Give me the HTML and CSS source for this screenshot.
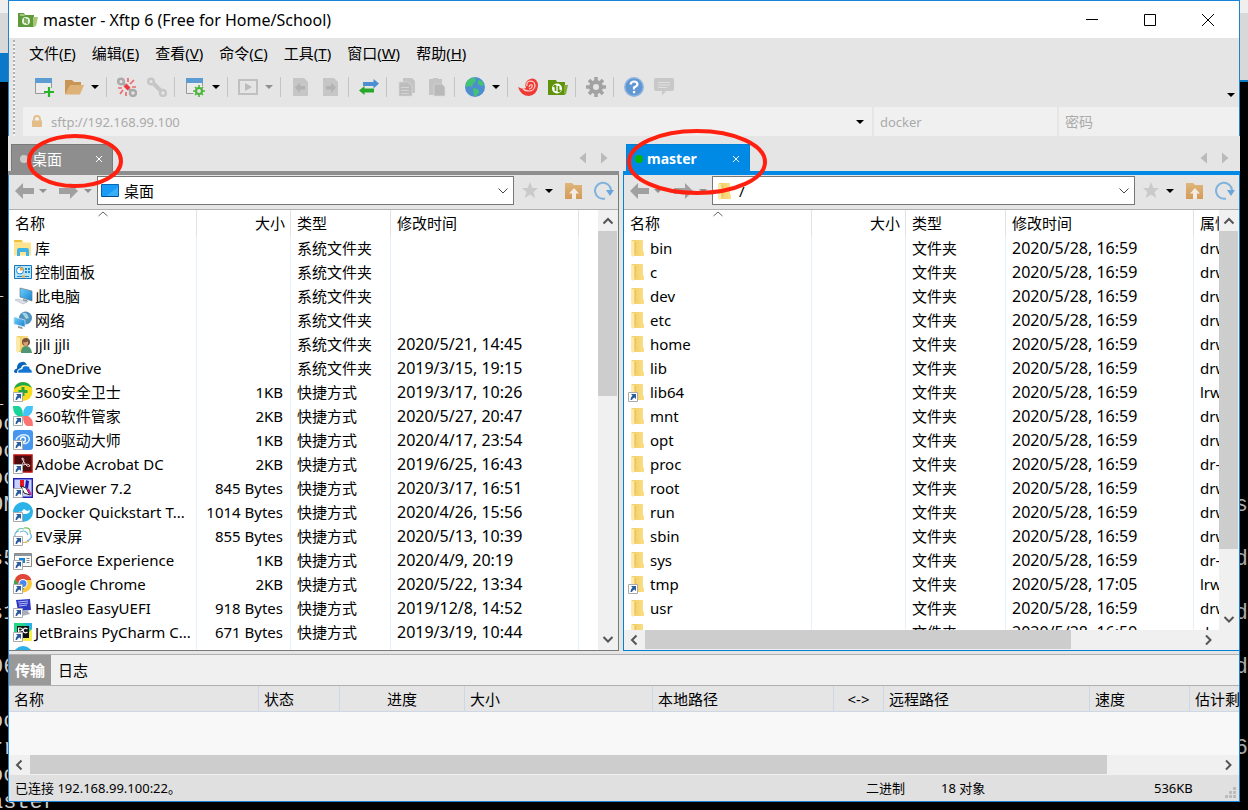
FILE: index.html
```
<!DOCTYPE html>
<html lang="zh-CN">
<head>
  <meta charset="UTF-8">
  <meta name="viewport" content="width=device-width, initial-scale=1.0">
  <title>master - Xftp 6 (Free for Home/School)</title>
  <link rel="stylesheet" href="styles.css">
</head>
<body>
  <svg class="sprite" aria-hidden="true">
    <defs>
      <linearGradient id="g-fold" x1="0" x2="1" y1="0" y2="0">
        <stop offset="0" stop-color="#f1cb62"/><stop offset="1" stop-color="#fbdf88"/>
      </linearGradient>
      <linearGradient id="g-screen" x1="0" x2="1" y1="0" y2="1">
        <stop offset="0" stop-color="#6fd0fb"/><stop offset="1" stop-color="#1583d4"/>
      </linearGradient>
      <linearGradient id="g-up" x1="0" x2="0" y1="0" y2="1">
        <stop offset="0" stop-color="#dfb67c"/><stop offset="1" stop-color="#d49b57"/>
      </linearGradient>
    </defs>
    <symbol id="caret" viewBox="0 0 10 20"><path d="M1 8h8L5 12z" fill="currentColor"/></symbol>
    <symbol id="link-mark" viewBox="0 0 20 20">
      <path d="M.5 10.500h9v9h-9z" fill="#fff" stroke="#aaa"/>
      <path d="M3 12h5v5l-1.500-1.500Q4.500 16 4 18H2.500q0-3 2-4.500z" fill="#2b5c9e"/>
    </symbol>
    <symbol id="folder" viewBox="0 0 20 20">
      <path d="M4 2h11v11l1 1v4H4z" fill="url(#g-fold)"/>
      <path d="M3 2l4 2v12l-2 3-2-2z" fill="#fde9a9"/>
      <path d="M7 4v12" stroke="#e3b850" fill="none"/>
    </symbol>
    <symbol id="library" viewBox="0 0 20 20">
      <path d="M1 2.500h8l1.500 2H18v13H1z" fill="#ffe38f"/><path d="M1 2h8v2H1z" fill="#f0c23c"/>
      <path d="M4 18v-6q0-2 2-2h8q2 0 2 2v6h-3v-4H7v4z" fill="#3eb5e6"/>
    </symbol>
    <symbol id="control" viewBox="0 0 20 20">
      <path d="M1.500 3.500h17v13h-17z" fill="#b7e5fb" stroke="#1a79b9"/>
      <circle cx="7" cy="8.500" r="3.500" fill="#fff" stroke="#2388cb"/><path d="M7 8.500V5a3.500 3.500 0 0 1 3.500 3.500z" fill="#f2a93b"/>
      <path d="M12 6h2v2h-2zM15 6h2v2h-2zM12 9h2v2h-2zM15 9h2v2h-2z" fill="#2388cb"/><path d="M4 14.500h12" stroke="#2388cb"/><path d="M9 13.500h3v2H9z" fill="#f2a93b"/>
    </symbol>
    <symbol id="pc" viewBox="0 0 20 20">
      <path d="M7 2l12 3v10L7 11z" fill="url(#g-screen)" stroke="#6d7c88" stroke-width=".7"/>
      <path d="M10 13l4 1 1 2-5-1z" fill="#8898a5"/><path d="M2 14l3-1 9 3-4 2z" fill="#dce2e8" stroke="#a9b3bb" stroke-width=".6"/>
    </symbol>
    <symbol id="network" viewBox="0 0 20 20">
      <circle cx="12.500" cy="8" r="6.500" fill="#4d93bd"/><path d="M9 3q3-1 5 1l2 4-3 1-2-3z" fill="#a5d3e6"/>
      <path d="M1 7l11 3v7L1 14z" fill="url(#g-screen)" stroke="#cde" stroke-width=".8"/><path d="M5 16l4 1 1 2-5-1z" fill="#8898a5"/>
    </symbol>
    <symbol id="user" viewBox="0 0 20 20">
      <path d="M4 2h11v16H4z" fill="url(#g-fold)"/><path d="M3 2l4 2v12l-2 3-2-2z" fill="#fde9a9"/>
      <circle cx="13" cy="8" r="4" fill="#76533d"/><path d="M10 8q3 1 5-1v3q-2 4-4 1z" fill="#d99e74"/><path d="M8 19q0-7 5-7t6 7z" fill="#4d9671"/>
    </symbol>
    <symbol id="onedrive" viewBox="0 0 20 20">
      <path d="M1 14q0-3 3-3.500Q4 4 9 4q3-1 5 3-5-1-6 3-4 1-4 5-3 0-3-1z" fill="#0a64b8"/>
      <path d="M5 15q-1-4 4-4 1-4 5-3 3 0 3 3 3 1 2 4z" fill="#1274d3" stroke="#fff" stroke-width=".6"/>
    </symbol>
    <symbol id="s360" viewBox="0 0 20 20">
      <circle cx="10" cy="9.500" r="9.500" fill="#f8dc1e"/><path d="M1 7Q3 0 10 0q6 0 9 6-8-6-18 1z" fill="#1fa94b"/><path d="M8.500 5h3v3h3v3h-3v3h-3v-3h-3V8h3z" fill="#24a53f"/>
    </symbol>
    <symbol id="soft360" viewBox="0 0 20 20">
      <path d="M0 0h6q4 2 4 10H5Q0 8 0 0z" fill="#19d39a"/><path d="M20 0h-6q-4 2-4 10h5q5-2 5-10z" fill="#43c3fa"/><path d="M20 20h-6q-4-2-4-10h5q5 2 5 10z" fill="#ff7272"/><path d="M0 20h6q4-2 4-10H5q-5 2-5 10z" fill="#ffb54d"/>
    </symbol>
    <symbol id="drv360" viewBox="0 0 20 20">
      <rect width="20" height="20" rx="3" fill="#4496ee"/><path d="M4 12q-2-2 1-5 5-4 10-1 3 4-1 7-2 1-4 0" fill="none" stroke="#d9ecff" stroke-width="1.500"/><circle cx="10" cy="9.500" r="2.500" fill="none" stroke="#fff" stroke-width="1.300"/>
    </symbol>
    <symbol id="acrobat" viewBox="0 0 20 20">
      <path d="M1 1h18v17H1z" fill="#4a0d10"/><path d="M1 1h18v17H1z" fill="none" stroke="#b9120f" stroke-width="1.500"/>
      <path d="M9 4q3 0 1 5-2 5-5 5-1-1 5-3t7 1q-3 2-6-4-3-4-2-4z" fill="none" stroke="#e8d5d5"/>
    </symbol>
    <symbol id="caj" viewBox="0 0 20 20">
      <path d="M.7.700h18.600v18.600H.700z" fill="#c9d2ff" stroke="#2420b4" stroke-width="1.400"/><path d="M7 2h4v7H7z" fill="#e41818"/><path d="M13 2l3 1-1 8-3-2z" fill="#201ab0"/><path d="M8 8l5 2 4 7-6-2z" fill="#fff" stroke="#222"/><path d="M15 11l3 6" stroke="#d02292" stroke-width="2"/>
    </symbol>
    <symbol id="docker" viewBox="0 0 20 20">
      <circle cx="10" cy="10" r="10" fill="#2bb2e6"/><path d="M6 9l2 1 3-3 3 2 3-1q0 4-5 4-5 0-6-3z" fill="#fff"/>
    </symbol>
    <symbol id="ev" viewBox="0 0 20 20">
      <g fill="none" stroke-width="1.200"><path d="M3 7Q5 1 11 3" stroke="#69c3ae"/><path d="M11 2q7-1 6 5" stroke="#79bd55"/><path d="M17 7q4 5-3 8" stroke="#58aede"/><path d="M16 15q-6 3-9 0" stroke="#d8ae5b"/><path d="M2 10q-1-4 4-5M7 6q6-3 8 3" stroke="#6ab7d6"/></g>
    </symbol>
    <symbol id="geforce" viewBox="0 0 20 20">
      <path d="M1.500 3.500h17v13h-17z" fill="#fafafa" stroke="#8a8a8a"/><path d="M2 4h16v2H2z" fill="#8f979d"/><path d="M6 8h6v5H9v-2H6z" fill="#1583d8"/><path d="M13.500 8.500h3m-3 2h3m-3 2h3" stroke="#888"/>
    </symbol>
    <symbol id="chrome" viewBox="0 0 20 20">
      <circle cx="10" cy="9.500" r="9" fill="#f9c93d"/><path d="M2 5a9 9 0 0 1 16.500 1H10L6 12z" fill="#e1463b"/><path d="M2 5l4.500 7 4.500 2-2 4.500A9 9 0 0 1 2 5z" fill="#3aa655"/><circle cx="10" cy="9.500" r="4.500" fill="#fff"/><circle cx="10" cy="9.500" r="3.500" fill="#4688f1"/>
    </symbol>
    <symbol id="uefi" viewBox="0 0 20 20">
      <path d="M3 2l14-1 1 11-13 1z" fill="#2e36c4"/><path d="M5 4l10-1M6 6l9-1M6 8l8-1" stroke="#b6bdf5"/><path d="M8 13l6-1 3 4-8 2z" fill="#a8adba"/>
    </symbol>
    <symbol id="pycharm" viewBox="0 0 20 20">
      <path d="M1 1h18v18H1z" fill="#21d789"/><path d="M11 1h8v8z" fill="#27b2e0"/><path d="M19 7v12H7z" fill="#f6ee4d"/><path d="M4 4h12v12H4z" fill="#111"/><path d="M5.500 11V6h2q2 .2 2 1.500T7.500 9h-2M14.500 7q-3-2-4 .5t1.500 3.300q1.500 0 2.500-.8" fill="none" stroke="#fff" stroke-width="1.200"/>
    </symbol>
    <symbol id="back" viewBox="0 0 20 20"><path d="M1 10l8-8v5h11v6H9v5z" fill="#a0a0a0"/></symbol>
    <symbol id="forward" viewBox="0 0 20 20"><path d="M19 10l-8-8v5H0v6h11v5z" fill="#a0a0a0"/></symbol>
    <symbol id="star" viewBox="0 0 20 20"><path d="M10 1l2.300 6H18l-4.500 4 1.800 6L10 13.500 4.700 17l1.800-6L2 7h5.700z" fill="#cacaca"/></symbol>
    <symbol id="up" viewBox="0 0 20 20"><path d="M1 2h7l2 2h8v14H1z" fill="url(#g-up)"/><path d="M10 7l5 5.500h-3V18H8v-5.500H5z" fill="#f2ece4"/></symbol>
    <symbol id="refresh" viewBox="0 0 20 20"><path d="M11 17.500A8 8 0 1 1 17 9" fill="none" stroke="#7fb2dd" stroke-width="2"/><path d="M12 9h8l-4 6z" fill="#69a4db"/></symbol>
    <symbol id="chev-d" viewBox="0 0 12 12"><path d="M1.500 3.500L6 8l4.500-4.500" fill="none" stroke="#444"/></symbol>
    <symbol id="arrow-u" viewBox="0 0 12 12"><path d="M1.500 8.500L6 4l4.500 4.500" fill="none" stroke="#555" stroke-width="2"/></symbol>
    <symbol id="arrow-d" viewBox="0 0 12 12"><path d="M1.500 3L6 7.500 10.500 3" fill="none" stroke="#555" stroke-width="2"/></symbol>
    <symbol id="arrow-l" viewBox="0 0 12 12"><path d="M7.500 1.500L3 6l4.500 4.500" fill="none" stroke="#555" stroke-width="2"/></symbol>
    <symbol id="arrow-r" viewBox="0 0 12 12"><path d="M3 1.500L7.500 6 3 10.500" fill="none" stroke="#555" stroke-width="2"/></symbol>
    <symbol id="tri-l" viewBox="0 0 12 12"><path d="M9 .5v11L2.500 6z" fill="#bababa"/></symbol>
    <symbol id="tri-r" viewBox="0 0 12 12"><path d="M3 .5v11L9.500 6z" fill="#bababa"/></symbol>
    <symbol id="close" viewBox="0 0 8 8"><path d="M1 1l6 6M7 1L1 7" stroke="#fff" fill="none"/></symbol>
  </svg>

  <div class="terminal" aria-hidden="true">
    <div class="behind"></div>
    <p><span>_</span></p><p></p><p></p><p></p><p><span>_</span></p>
    <p><span>oc</span></p><p><span>oc</span></p><p><span>oc</span></p>
    <p><span>ON</span><span>s</span></p><p></p>
    <p><span>s5</span><span>d</span></p><p></p>
    <p><span>s1</span><span>d</span></p><p></p>
    <p><span>06</span><span>d</span></p><p></p>
    <p><span>oc</span></p><p><span>rr</span><span>6</span></p><p><span>oc</span></p><p><span>aster</span></p>
  </div>

  <main class="window">
    <header class="titlebar">
      <svg class="app-icon" viewBox="0 0 20 16"><path d="M0 1h6l1 2h9v12H0z" fill="#5f9a3a"/><path d="M2 2h4l1 2H2zM15 5h5l-2 9-3 1z" fill="#a5c777"/><circle cx="8" cy="9" r="4" fill="#e8f1df"/><path d="M7 6v5M9 7v5" stroke="#5f9a3a" stroke-width="1.500"/></svg>
      <h1>master - Xftp 6 (Free for Home/School)</h1>
      <div class="win-buttons">
        <button aria-label="最小化"><svg viewBox="0 0 12 12"><path d="M0 5.500h12" stroke="#000"/></svg></button>
        <button aria-label="最大化"><svg viewBox="0 0 12 12"><path d="M.5.500h11v11H.500z" fill="none" stroke="#000"/></svg></button>
        <button aria-label="关闭"><svg viewBox="0 0 12 12"><path d="M0 0l12 12M12 0L0 12" stroke="#000"/></svg></button>
      </div>
    </header>

    <div class="bars">
      <div class="gripper"></div>
      <div class="bars-body">
        <nav class="menu">
          <button>文件(<u>F</u>)</button>
          <button>编辑(<u>E</u>)</button>
          <button>查看(<u>V</u>)</button>
          <button>命令(<u>C</u>)</button>
          <button>工具(<u>T</u>)</button>
          <button>窗口(<u>W</u>)</button>
          <button>帮助(<u>H</u>)</button>
        </nav>

        <div class="toolbar">
          <div class="group">
            <button aria-label="新建"><svg viewBox="0 0 20 20"><path d="M2 6h15v10H2z" fill="#ececec"/><path d="M1 1h17v5H1z" fill="#5d9bd3"/><path d="M1.500 6v10.500h10M17.500 6v5" fill="none" stroke="#999"/><path d="M15 10v10M10 15h10" stroke="#27b427" stroke-width="2.200"/></svg></button>
            <button aria-label="打开"><svg viewBox="0 0 20 20"><path d="M1 3h7l2 2h7v4H6l-4 8H1z" fill="#c89555"/><path d="M6 8h14l-4 9.500H1z" fill="#deb276"/></svg></button>
            <button class="drop" aria-label="打开列表"><svg><use href="#caret"/></svg></button>
          </div>
          <div class="group">
            <button aria-label="断开"><svg viewBox="0 0 20 20"><g fill="none" stroke="#aaa" stroke-width="2.500"><circle cx="4" cy="4.500" r="2.800"/><circle cx="16" cy="16" r="3"/></g><path d="M6 6l2 2M12 12l2 2" stroke="#aaa" stroke-width="3"/><path d="M11 5V1M13 7l4-4M15 10h4M1 11h4M3 17l3-4M9 15v4" stroke="#ec6a6e" stroke-width="1.700"/><path d="M8 8l4 4" stroke="#ec3a3e" stroke-width="4"/></svg></button>
            <button aria-label="连接"><svg viewBox="0 0 20 20"><g fill="none" stroke="#c6c6c6" stroke-width="2.500"><circle cx="4" cy="4.500" r="2.800"/><circle cx="16" cy="16" r="3"/><path d="M6 6l8 8" stroke-width="4"/></g></svg></button>
          </div>
          <div class="group">
            <button aria-label="会话属性"><svg viewBox="0 0 20 20"><path d="M2 6h15v10H2z" fill="#ececec"/><path d="M1 1h17v5H1z" fill="#5d9bd3"/><path d="M1.500 6v10.500h7M17.500 6v3" fill="none" stroke="#999"/><circle cx="14" cy="14" r="3" fill="#e5e5e5" stroke="#4db53c" stroke-width="2.200"/><path d="M14 8v3M14 17v3M8 14h3M17 14h3M10 10l2 2M16 16l2 2M18 10l-2 2M12 16l-2 2" stroke="#4db53c" stroke-width="1.600"/></svg></button>
            <button class="drop" aria-label="属性列表"><svg><use href="#caret"/></svg></button>
          </div>
          <div class="group">
            <button aria-label="运行" disabled><svg viewBox="0 0 20 20"><path d="M1 3h18v14H1z" fill="none" stroke="#c0c0c0" stroke-width="2"/><path d="M7 6l7 4-7 4z" fill="#bcbcbc"/></svg></button>
            <button class="drop" aria-label="运行列表" disabled><svg><use href="#caret"/></svg></button>
          </div>
          <div class="group">
            <button aria-label="下载" disabled><svg viewBox="0 0 20 20"><path d="M2 1h11l4 4v14H2z" fill="#c6c6c6"/><path d="M4 10.500l5-5v3.500h5v3.500H9V16z" fill="#b2b2b2"/></svg></button>
            <button aria-label="上传" disabled><svg viewBox="0 0 20 20"><path d="M2 1h11l4 4v14H2z" fill="#c6c6c6"/><path d="M15 10.500l-5-5v3.500H5v3.500h5V16z" fill="#b2b2b2"/></svg></button>
          </div>
          <div class="group">
            <button aria-label="同步"><svg viewBox="0 0 20 20"><path d="M20 6.500L14.500 2v3H4v4h10.500v2.500z" fill="#4c8ed0"/><path d="M0 13.500L5.500 9v2.500H15v4H5.500V18z" fill="#2aa72a"/></svg></button>
          </div>
          <div class="group">
            <button aria-label="复制" disabled><svg viewBox="0 0 20 20"><path d="M6 1h9l3 3v12H6z" fill="#c4c4c4"/><path d="M2 5h9l4 4v10H2z" fill="#bcbcbc" stroke="#dadada" stroke-width=".7"/><path d="M4 10.500h8m-8 3h8m-8 3h8" stroke="#d5d5d5"/></svg></button>
            <button aria-label="粘贴" disabled><svg viewBox="0 0 20 20"><path d="M2 2h4V1h5v1h4v16H2z" fill="#c4c4c4"/><path d="M7 7h8l3 3v9H7z" fill="#b9b9b9" stroke="#dadada" stroke-width=".7"/></svg></button>
          </div>
          <div class="group">
            <button aria-label="语言"><svg viewBox="0 0 20 20"><circle cx="10" cy="10" r="10" fill="#4d8fce"/><path d="M2 4q4-4 8-3l1 3-3 3-1 3-3-1-3 1Q0 7 2 4zM13 3l4 1 2 4-3 1-3-2zM8 11l5 1 1 3-3 4-2 0z" fill="#43c274"/></svg></button>
            <button class="drop" aria-label="语言列表"><svg><use href="#caret"/></svg></button>
          </div>
          <div class="group">
            <button aria-label="Xshell"><svg viewBox="0 0 20 20"><path d="M0 10q5 3 8 1-2-5 2-8 5-3 8 0 2 2 2 6-1 9-9 10Q3 19 0 10z" fill="#ef3b36"/><path d="M9 9q-1-4 3-5 5 0 5 5-1 5-6 5-4 0-6-2M11 10q1-3 3-2 1 3-3 4" fill="none" stroke="#ffd9d5" stroke-width="1.200"/></svg></button>
            <button aria-label="Xftp"><svg viewBox="0 0 20 20"><path d="M0 3h8l1 2h8v13H0z" fill="#5e930b"/><path d="M16 8h4l-2 9-2 1z" fill="#83ad38"/><circle cx="9" cy="11.500" r="5" fill="#fff"/><path d="M7.500 8v6M10.500 9v6M7.500 8l-2 2M10.500 15l2-2" fill="none" stroke="#5e930b" stroke-width="1.700"/></svg></button>
          </div>
          <div class="group">
            <button aria-label="选项"><svg viewBox="0 0 20 20"><path d="M10 0v20M0 10h20M3 3l14 14M17 3L3 17" stroke="#a2a2a2" stroke-width="3.500"/><circle cx="10" cy="10" r="5" fill="#e5e5e5" stroke="#a2a2a2" stroke-width="4"/></svg></button>
          </div>
          <div class="group">
            <button aria-label="帮助"><svg viewBox="0 0 20 20"><circle cx="10" cy="10" r="9.200" fill="#6097d2" stroke="#8fb5df" stroke-width="1.500"/><path d="M6.500 7.500q.5-3 3.500-3t3.500 2.500q0 2-3.500 3.500v2" fill="none" stroke="#fff" stroke-width="2.200"/><path d="M8.900 14h2.300v2.300H8.900z" fill="#fff"/></svg></button>
            <button aria-label="反馈" disabled><svg viewBox="0 0 20 20"><path d="M2 1h16q2 0 2 2v9q0 2-2 2h-6l-4 4.500V14H2q-2 0-2-2V3q0-2 2-2z" fill="#c8c8c8"/><path d="M4 5.500h12M4 8h12M4 10.500h9" stroke="#dfdfdf" stroke-width="1.200"/></svg></button>
          </div>
          <button class="drop more" aria-label="更多"><svg><use href="#caret"/></svg></button>
        </div>

        <form class="address">
          <div class="host">
            <svg class="lock" viewBox="0 0 12 14"><path d="M3 6V4q0-3 3-3t3 3v2" fill="none" stroke="#e3be88" stroke-width="1.800"/><path d="M1 5.500h10V12H1z" fill="#e3be88"/></svg>
            <input type="text" aria-label="主机" value="sftp://192.168.99.100">
            <button type="button" class="drop" aria-label="主机列表"><svg><use href="#caret"/></svg></button>
          </div>
          <input class="login" type="text" aria-label="用户名" value="docker">
          <input class="login" type="password" aria-label="密码" placeholder="密码">
        </form>
      </div>
    </div>

    <div class="panes">
      <section class="pane local">
        <div class="tabs">
          <div class="tab">
            <i class="dot"></i><span>桌面</span>
            <button aria-label="关闭标签"><svg><use href="#close"/></svg></button>
            <svg class="mark" viewBox="0 0 98 56"><ellipse cx="49" cy="28" rx="46" ry="25"/></svg>
          </div>
          <div class="tab-nav">
            <button aria-label="上一个"><svg><use href="#tri-l"/></svg></button>
            <button aria-label="下一个"><svg><use href="#tri-r"/></svg></button>
          </div>
        </div>
        <div class="nav">
          <button aria-label="后退"><svg><use href="#back"/></svg></button>
          <button class="drop first" aria-label="后退列表" disabled><svg><use href="#caret"/></svg></button>
          <button aria-label="前进"><svg><use href="#forward"/></svg></button>
          <button class="drop" aria-label="前进列表" disabled><svg><use href="#caret"/></svg></button>
          <div class="path">
            <svg viewBox="0 0 20 20"><path d="M1.500 3.500h17v12h-17z" fill="#169bf6" stroke="#0965b0"/><path d="M6 15l12-9v9z" fill="#38aef9"/><path d="M2 15.500h16" stroke="#064b86"/></svg>
            <input type="text" aria-label="本地路径" value="桌面">
            <button aria-label="展开路径"><svg><use href="#chev-d"/></svg></button>
          </div>
          <button class="star" aria-label="收藏"><svg><use href="#star"/></svg></button>
          <button class="drop" aria-label="收藏列表"><svg><use href="#caret"/></svg></button>
          <button class="spaced" aria-label="上级"><svg><use href="#up"/></svg></button>
          <button class="spaced" aria-label="刷新"><svg><use href="#refresh"/></svg></button>
        </div>
        <div class="list">
          <div class="files">
            <table>
              <colgroup><col class="c-name"><col class="c-size"><col class="c-type"><col class="c-date"><col></colgroup>
              <thead>
                <tr><th>名称<svg class="sort" viewBox="0 0 12 12"><path d="M1.500 8L6 4l4.500 4" fill="none" stroke="#666"/></svg></th><th>大小</th><th>类型</th><th>修改时间</th><th></th></tr>
              </thead>
              <tbody>
                <tr><td><svg><use href="#library"/></svg>库</td><td></td><td>系统文件夹</td><td></td><td></td></tr>
                <tr><td><svg><use href="#control"/></svg>控制面板</td><td></td><td>系统文件夹</td><td></td><td></td></tr>
                <tr><td><svg><use href="#pc"/></svg>此电脑</td><td></td><td>系统文件夹</td><td></td><td></td></tr>
                <tr><td><svg><use href="#network"/></svg>网络</td><td></td><td>系统文件夹</td><td></td><td></td></tr>
                <tr><td><svg><use href="#user"/></svg>jjli jjli</td><td></td><td>系统文件夹</td><td>2020/5/21, 14:45</td><td></td></tr>
                <tr><td><svg><use href="#onedrive"/></svg>OneDrive</td><td></td><td>系统文件夹</td><td>2019/3/15, 19:15</td><td></td></tr>
                <tr><td><svg><use href="#s360"/><use href="#link-mark"/></svg>360安全卫士</td><td>1KB</td><td>快捷方式</td><td>2019/3/17, 10:26</td><td></td></tr>
                <tr><td><svg><use href="#soft360"/><use href="#link-mark"/></svg>360软件管家</td><td>2KB</td><td>快捷方式</td><td>2020/5/27, 20:47</td><td></td></tr>
                <tr><td><svg><use href="#drv360"/><use href="#link-mark"/></svg>360驱动大师</td><td>1KB</td><td>快捷方式</td><td>2020/4/17, 23:54</td><td></td></tr>
                <tr><td><svg><use href="#acrobat"/><use href="#link-mark"/></svg>Adobe Acrobat DC</td><td>2KB</td><td>快捷方式</td><td>2019/6/25, 16:43</td><td></td></tr>
                <tr><td><svg><use href="#caj"/><use href="#link-mark"/></svg>CAJViewer 7.2</td><td>845 Bytes</td><td>快捷方式</td><td>2020/3/17, 16:51</td><td></td></tr>
                <tr><td><svg><use href="#docker"/><use href="#link-mark"/></svg>Docker Quickstart T...</td><td>1014 Bytes</td><td>快捷方式</td><td>2020/4/26, 15:56</td><td></td></tr>
                <tr><td><svg><use href="#ev"/><use href="#link-mark"/></svg>EV录屏</td><td>855 Bytes</td><td>快捷方式</td><td>2020/5/13, 10:39</td><td></td></tr>
                <tr><td><svg><use href="#geforce"/><use href="#link-mark"/></svg>GeForce Experience</td><td>1KB</td><td>快捷方式</td><td>2020/4/9, 20:19</td><td></td></tr>
                <tr><td><svg><use href="#chrome"/><use href="#link-mark"/></svg>Google Chrome</td><td>2KB</td><td>快捷方式</td><td>2020/5/22, 13:34</td><td></td></tr>
                <tr><td><svg><use href="#uefi"/><use href="#link-mark"/></svg>Hasleo EasyUEFI</td><td>918 Bytes</td><td>快捷方式</td><td>2019/12/8, 14:52</td><td></td></tr>
                <tr><td><svg><use href="#pycharm"/><use href="#link-mark"/></svg>JetBrains PyCharm C...</td><td>671 Bytes</td><td>快捷方式</td><td>2019/3/19, 10:44</td><td></td></tr>
                <tr><td><svg><use href="#docker"/></svg></td><td></td><td></td><td></td><td></td></tr>
              </tbody>
            </table>
          </div>
          <div class="scroll vertical">
            <button aria-label="向上滚动"><svg><use href="#arrow-u"/></svg></button>
            <div class="thumb"></div><div class="rest"></div>
            <button aria-label="向下滚动"><svg><use href="#arrow-d"/></svg></button>
          </div>
        </div>
      </section>

      <section class="pane remote">
        <div class="tabs">
          <div class="tab">
            <i class="dot"></i><span>master</span>
            <button aria-label="关闭标签"><svg><use href="#close"/></svg></button>
            <svg class="mark" viewBox="0 0 140 68"><ellipse cx="70" cy="34" rx="68" ry="31"/></svg>
          </div>
          <div class="tab-nav">
            <button aria-label="上一个"><svg><use href="#tri-l"/></svg></button>
            <button aria-label="下一个"><svg><use href="#tri-r"/></svg></button>
          </div>
        </div>
        <div class="nav">
          <button aria-label="后退"><svg><use href="#back"/></svg></button>
          <button class="drop first" aria-label="后退列表" disabled><svg><use href="#caret"/></svg></button>
          <button aria-label="前进"><svg><use href="#forward"/></svg></button>
          <button class="drop" aria-label="前进列表" disabled><svg><use href="#caret"/></svg></button>
          <div class="path">
            <svg><use href="#folder"/></svg>
            <input type="text" aria-label="远程路径" value="/">
            <button aria-label="展开路径"><svg><use href="#chev-d"/></svg></button>
          </div>
          <button class="star" aria-label="收藏"><svg><use href="#star"/></svg></button>
          <button class="drop" aria-label="收藏列表"><svg><use href="#caret"/></svg></button>
          <button class="spaced" aria-label="上级"><svg><use href="#up"/></svg></button>
          <button class="spaced" aria-label="刷新"><svg><use href="#refresh"/></svg></button>
        </div>
        <div class="list">
          <div class="files">
            <table>
              <colgroup><col class="c-name"><col class="c-size"><col class="c-type"><col class="c-date"><col></colgroup>
              <thead>
                <tr><th>名称<svg class="sort" viewBox="0 0 12 12"><path d="M1.500 8L6 4l4.500 4" fill="none" stroke="#666"/></svg></th><th>大小</th><th>类型</th><th>修改时间</th><th>属性</th></tr>
              </thead>
              <tbody>
                <tr><td><svg><use href="#folder"/></svg>bin</td><td></td><td>文件夹</td><td>2020/5/28, 16:59</td><td>drw</td></tr>
                <tr><td><svg><use href="#folder"/></svg>c</td><td></td><td>文件夹</td><td>2020/5/28, 16:59</td><td>drw</td></tr>
                <tr><td><svg><use href="#folder"/></svg>dev</td><td></td><td>文件夹</td><td>2020/5/28, 16:59</td><td>drw</td></tr>
                <tr><td><svg><use href="#folder"/></svg>etc</td><td></td><td>文件夹</td><td>2020/5/28, 16:59</td><td>drw</td></tr>
                <tr><td><svg><use href="#folder"/></svg>home</td><td></td><td>文件夹</td><td>2020/5/28, 16:59</td><td>drw</td></tr>
                <tr><td><svg><use href="#folder"/></svg>lib</td><td></td><td>文件夹</td><td>2020/5/28, 16:59</td><td>drw</td></tr>
                <tr><td><svg><use href="#folder"/><use href="#link-mark"/></svg>lib64</td><td></td><td>文件夹</td><td>2020/5/28, 16:59</td><td>lrw</td></tr>
                <tr><td><svg><use href="#folder"/></svg>mnt</td><td></td><td>文件夹</td><td>2020/5/28, 16:59</td><td>drw</td></tr>
                <tr><td><svg><use href="#folder"/></svg>opt</td><td></td><td>文件夹</td><td>2020/5/28, 16:59</td><td>drw</td></tr>
                <tr><td><svg><use href="#folder"/></svg>proc</td><td></td><td>文件夹</td><td>2020/5/28, 16:59</td><td>dr-</td></tr>
                <tr><td><svg><use href="#folder"/></svg>root</td><td></td><td>文件夹</td><td>2020/5/28, 16:59</td><td>drw</td></tr>
                <tr><td><svg><use href="#folder"/></svg>run</td><td></td><td>文件夹</td><td>2020/5/28, 16:59</td><td>drw</td></tr>
                <tr><td><svg><use href="#folder"/></svg>sbin</td><td></td><td>文件夹</td><td>2020/5/28, 16:59</td><td>drw</td></tr>
                <tr><td><svg><use href="#folder"/></svg>sys</td><td></td><td>文件夹</td><td>2020/5/28, 16:59</td><td>dr-</td></tr>
                <tr><td><svg><use href="#folder"/><use href="#link-mark"/></svg>tmp</td><td></td><td>文件夹</td><td>2020/5/28, 17:05</td><td>lrw</td></tr>
                <tr><td><svg><use href="#folder"/></svg>usr</td><td></td><td>文件夹</td><td>2020/5/28, 16:59</td><td>drw</td></tr>
                <tr><td><svg><use href="#folder"/></svg>var</td><td></td><td>文件夹</td><td>2020/5/28, 16:59</td><td>drw</td></tr>
              </tbody>
            </table>
          </div>
          <div class="scroll vertical">
            <button aria-label="向上滚动"><svg><use href="#arrow-u"/></svg></button>
            <div class="thumb"></div><div class="rest"></div>
            <button aria-label="向下滚动"><svg><use href="#arrow-d"/></svg></button>
          </div>
        </div>
        <div class="scroll horizontal">
          <button aria-label="向左滚动"><svg><use href="#arrow-l"/></svg></button>
          <div class="thumb"></div><div class="rest"></div>
          <button aria-label="向右滚动"><svg><use href="#arrow-r"/></svg></button>
        </div>
      </section>
    </div>

    <section class="transfers">
      <div class="bottom-tabs">
        <button class="active">传输</button>
        <button>日志</button>
      </div>
      <div class="queue">
        <table>
          <colgroup><col class="q-name"><col class="q-state"><col class="q-progress"><col class="q-size"><col class="q-local"><col class="q-dir"><col class="q-remote"><col class="q-speed"><col></colgroup>
          <thead>
            <tr><th>名称</th><th>状态</th><th class="center">进度</th><th>大小</th><th>本地路径</th><th class="center">&lt;-&gt;</th><th>远程路径</th><th>速度</th><th>估计剩</th></tr>
          </thead>
        </table>
      </div>
      <div class="scroll horizontal">
        <button aria-label="向左滚动"><svg><use href="#arrow-l"/></svg></button>
        <div class="thumb"></div><div class="rest"></div>
        <button aria-label="向右滚动"><svg><use href="#arrow-r"/></svg></button>
      </div>
    </section>

    <footer class="status">
      <span class="grow">已连接 192.168.99.100:22。</span>
      <span class="mode">二进制</span>
      <span class="count">18 对象</span>
      <span class="total">536KB</span>
      <svg viewBox="0 0 12 12"><path d="M8 0h3v3H8zM4 4h3v3H4zM8 4h3v3H8zM0 8h3v3H0zM4 8h3v3H4zM8 8h3v3H8z" fill="#bcbcbc"/></svg>
    </footer>
  </main>
</body>
</html>
```
FILE: styles.css
```
*, *::before, *::after {
  box-sizing: border-box;
  margin: 0;
  padding: 0;
}

body {
  position: relative;
  display: flex;
  height: 100vh;
  overflow: hidden;
  background: #000;
  color: #000;
  font-family: "Noto Sans", "Noto Sans CJK SC", sans-serif;
  font-size: 15px;
  line-height: 20px;
}

button, input {
  border: none;
  background: none;
  color: inherit;
  font: inherit;
}

button {
  display: flex;
  align-items: center;
  justify-content: center;
}

svg {
  display: block;
  flex: none;
}

.sprite {
  position: absolute;
  width: 0;
  height: 0;
}

/* desktop behind the window */
.terminal {
  position: absolute;
  inset: 0;
  display: flex;
  flex-direction: column;
  overflow: hidden;
  color: #ccc;
  font-family: "Liberation Mono", monospace;
  font-size: 22px;
  line-height: 27px;

  .behind {
    flex: none;
    height: 82px;
    margin-bottom: 194px;
    background:
      linear-gradient(#efefef 13px, #d8d8d8 13px 53px, #0a7ac8 53px) left / 50% 100% no-repeat,
      linear-gradient(#efefef 13px, #d8d8d8 13px 80px, #0a7ac8 80px) right / 50% 100% no-repeat;
  }

  p {
    display: flex;
    justify-content: space-between;
    flex: none;
    height: 27px;
    margin-left: -10px;
  }

  span:last-child:not(:first-child) {
    color: #aaa;
  }
}

.window {
  position: relative;
  display: flex;
  flex: 1;
  flex-direction: column;
  min-width: 0;
  margin: 0 8px 8px;
  border: 1px solid #1883d7;
  background: #e5e5e5;
}

.titlebar {
  display: flex;
  align-items: center;
  height: 37px;
  padding-left: 9px;
  background: #fff;

  .app-icon {
    width: 20px;
    height: 16px;
    margin-right: 5px;
  }

  h1 {
    font-size: 16px;
    font-weight: 400;
  }
}

.win-buttons {
  display: flex;
  margin: 0 2px 0 auto;

  button {
    width: 58px;
    height: 36px;
  }

  svg {
    width: 12px;
    height: 12px;
  }
}

.bars {
  display: flex;
}

.gripper {
  width: 2px;
  margin: 2px 8px 0 4px;
  background: repeating-linear-gradient(#b0b0b0 0 2px, #f6f6f6 2px 4px);
}

.bars-body {
  flex: 1;
  min-width: 0;
}

.menu {
  display: flex;
  gap: 16px;
  height: 30px;
  padding-left: 6px;
}

.toolbar {
  display: flex;
  align-items: center;
  height: 39px;
  padding: 0 0 2px 1px;

  svg {
    width: 20px;
    height: 20px;
  }
}

.group {
  display: flex;
  gap: 10px;
  padding: 0 7px 0 10px;
  border-right: 1px solid #c4c4c4;

  &:nth-last-child(2) {
    border-right: none;
  }

  .drop {
    margin: 0 -1px 0 -4px;
  }
}

.drop {
  width: 10px;
  color: #000;

  &:disabled {
    color: #909090;
  }

  svg {
    width: 10px;
    height: 20px;
  }
}

.more {
  align-self: flex-end;
  margin: 0 3px 0 auto;
}

.address {
  display: grid;
  grid-template-columns: 849fr 183fr 180fr;
  gap: 2px;
  height: 29px;
  color: #aaa;
  font-size: 13px;

  .host, .login {
    min-width: 0;
    background: #f0f0f0;
  }

  .host {
    display: flex;
    align-items: center;
    gap: 8px;
    padding: 0 7px 0 8px;
  }

  .host input {
    flex: 1;
  }

  .login {
    padding: 0 6px;
  }

  input::placeholder {
    color: #aaa;
    font-size: 14px;
  }

  .lock {
    width: 12px;
    height: 14px;
  }
}

.panes {
  display: grid;
  grid-template-columns: 610fr 616fr;
  gap: 4px;
  flex: 1;
  min-height: 0;
}

.pane {
  --accent: #8e8e8e;
  --edge: #7a7a7a;
  display: flex;
  flex-direction: column;
  min-width: 0;
  min-height: 0;
  border-bottom: 1px solid var(--edge);
}

.local {
  border-right: 1px solid var(--edge);
}

.remote {
  --accent: #008ae6;
  --edge: #0082d6;
  border-left: 1px solid var(--edge);
}

.tabs {
  display: flex;
  justify-content: space-between;
  height: 39px;
  margin: 0 -1px;
  padding: 8px 9px 0 3px;
  border-bottom: 4px solid var(--accent);
  background: #e5e5e5;
}

.tab {
  position: relative;
  display: flex;
  align-items: center;
  width: 102px;
  padding: 2px 9px 0 8px;
  border: 1px solid var(--edge);
  border-bottom: none;
  background: var(--accent);
  color: #fff;

  .dot {
    width: 8px;
    height: 8px;
    margin-right: 4px;
    border-radius: 50%;
    background: #ccc;
  }

  button {
    width: 8px;
    margin-left: auto;
  }

  button svg {
    width: 8px;
    height: 8px;
  }

  /* hand-drawn highlight round the tab */
  .mark {
    position: absolute;
    z-index: 2;
    top: -12px;
    left: 14px;
    width: 98px;
    height: 56px;
    fill: none;
    stroke: #ff2010;
    stroke-width: 4px;
  }
}

.remote .tab {
  width: 124px;
  font-size: 14px;
  font-weight: 700;

  .dot {
    background: #08b408;
  }

  .mark {
    top: -17px;
    left: 0;
    width: 140px;
    height: 68px;
  }
}

.tab-nav {
  display: flex;
  gap: 9px;

  button {
    width: 12px;
  }

  svg {
    width: 12px;
    height: 12px;
  }
}

.nav {
  display: flex;
  align-items: center;
  gap: 4px;
  height: 35px;
  padding: 1px 4px 4px 5px;
  border-bottom: 1px solid #b0b0b0;

  > button:not(.drop) svg, .path > svg {
    width: 20px;
    height: 20px;
  }

  .first {
    margin-right: 7px;
  }

  .star {
    margin-left: 2px;
  }

  .spaced {
    margin-left: 6px;
  }
}

.path {
  display: flex;
  flex: 1;
  align-items: center;
  gap: 4px;
  min-width: 0;
  height: 29px;
  padding: 0 4px 0 2px;
  border: 1px solid #777;
  background: #fff;

  input {
    flex: 1;
    min-width: 0;
  }

  button svg {
    width: 12px;
    height: 12px;
  }
}

.list {
  display: flex;
  flex: 1;
  min-height: 0;
  background: #fff;
}

.files {
  flex: 1;
  min-width: 0;
  overflow: hidden;
}

table {
  width: 100%;
  border-spacing: 0;
  table-layout: fixed;
}

th, td {
  overflow: hidden;
  padding: 0 6px;
  font-weight: 400;
  text-align: left;
  white-space: nowrap;
}

.files {
  .c-name {
    width: 188px;
  }

  .c-size {
    width: 94px;
  }

  .c-type {
    width: 100px;
  }

  .c-date {
    width: 188px;
  }

  th {
    position: relative;
    height: 26px;
    border-right: 1px solid #e2e2e2;
  }

  td {
    height: 24px;
    border-right: 1px solid #e6f0fb;
  }

  td:nth-child(4) {
    font-size: 16px;
  }

  th:last-child, td:last-child {
    padding-right: 0;
    border-right: none;
  }

  th:nth-child(2), td:nth-child(2) {
    padding-right: 7px;
    text-align: right;
  }

  th:nth-child(2) {
    padding-right: 5px;
  }

  td:first-child {
    padding: 0 0 0 4px;
  }

  td svg {
    display: inline-block;
    width: 20px;
    height: 20px;
    margin-right: 2px;
    vertical-align: top;
  }

  .sort {
    position: absolute;
    top: -2px;
    left: 50%;
    width: 12px;
    height: 12px;
    margin-left: -6px;
  }
}

.scroll {
  display: flex;
  flex: none;
  background: #f0f0f0;

  svg {
    width: 12px;
    height: 12px;
  }

  .thumb {
    background: #cdcdcd;
  }
}

.vertical {
  flex-direction: column;
  width: 20px;

  button {
    height: 21px;
  }

  .thumb {
    flex: 165;
    margin-right: 1px;
  }

  .rest {
    flex: 233;
  }
}

.horizontal {
  height: 20px;

  button {
    width: 21px;
  }

  .thumb {
    flex: 1077;
    margin-bottom: 1px;
  }

  .rest {
    flex: 111;
  }
}

.remote {
  .vertical .thumb {
    flex: 317;
  }

  .vertical .rest {
    flex: 60;
  }

  .horizontal {
    padding-right: 20px;
  }

  .horizontal .thumb {
    flex: 426;
  }

  .horizontal .rest {
    flex: 127;
  }
}

.transfers {
  margin-top: 3px;
  border-top: 1px solid #b0b0b0;
}

.bottom-tabs {
  display: flex;
  height: 31px;
  border-bottom: 1px solid #b0b0b0;
  background: #f0f0f0;

  button {
    padding: 0 7px;
  }

  .active {
    padding: 0 6px;
    background: #999;
    color: #fff;
    font-weight: 700;
  }
}

.queue {
  height: 69px;
  background: #f8f8f8;

  .q-name {
    width: 250px;
  }

  .q-state {
    width: 81px;
  }

  .q-progress {
    width: 125px;
  }

  .q-size {
    width: 188px;
  }

  .q-local {
    width: 181px;
  }

  .q-dir {
    width: 50px;
  }

  .q-remote {
    width: 206px;
  }

  .q-speed {
    width: 100px;
  }

  th {
    height: 26px;
    padding: 0 5px;
    border-right: 1px solid #cdd8e4;
    border-bottom: 1px solid #cdd8e4;
    background: #e5e5e5;
  }

  th:last-child {
    padding-right: 0;
    border-right: none;
  }

  .center {
    text-align: center;
  }
}

.status {
  display: flex;
  align-items: center;
  height: 26px;
  padding: 0 2px 0 6px;
  background: #e0e0e0;
  font-size: 13px;

  .grow {
    flex: 1;
  }

  .mode {
    width: 75px;
  }

  .count {
    width: 213px;
  }

  .total {
    width: 71px;
  }

  svg {
    align-self: flex-end;
    width: 12px;
    height: 12px;
    margin-bottom: 2px;
  }
}
```
